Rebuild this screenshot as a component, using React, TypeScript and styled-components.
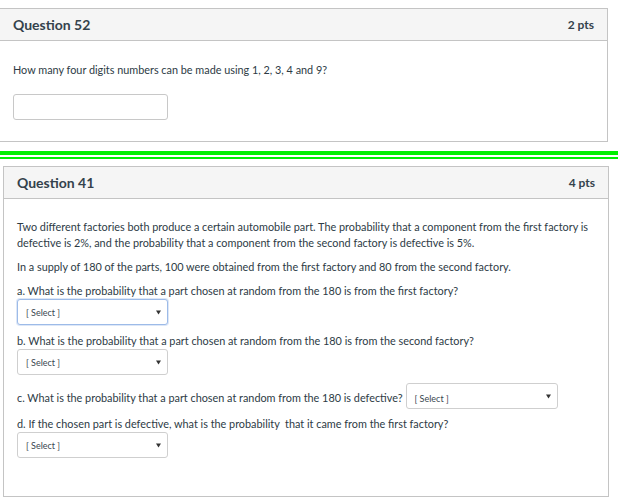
import styled, { createGlobalStyle, css } from "styled-components";

const GlobalStyle = createGlobalStyle`
  html, body {
    margin: 0;
    padding: 0;
    background: #ffffff;
  }
  body {
    font-family: Lato, "Open Sans", "Liberation Sans", sans-serif;
    color: #2d3b45;
  }
`;

interface SelectProps {
  focused?: boolean;
  inline?: boolean;
}

function Select({ focused, inline }: SelectProps) {
  return (
    <StQuiz.Select $focused={focused} $inline={inline}>
      <span className="label">[ Select ]</span>
      <svg width="5" height="5" viewBox="0 0 5 5">
        <path d="M0 0.5 L5 0.5 L2.5 4.5 Z" fill="#333" />
      </svg>
    </StQuiz.Select>
  );
}

function App() {
  return (
    <>
      <GlobalStyle />
      <StQuiz.Page>
        <StQuiz.Panel $first>
          <StQuiz.Header>
            <StQuiz.Title>Question 52</StQuiz.Title>
            <StQuiz.Points>2 pts</StQuiz.Points>
          </StQuiz.Header>
          <StQuiz.Body $first>
            <StQuiz.Text>
              How many four digits numbers can be made using 1, 2, 3, 4 and 9?
            </StQuiz.Text>
            <StQuiz.Input />
          </StQuiz.Body>
        </StQuiz.Panel>

        <StQuiz.Divider>
          <div className="thick" />
          <div className="thin" />
        </StQuiz.Divider>

        <StQuiz.Panel>
          <StQuiz.Header>
            <StQuiz.Title>Question 41</StQuiz.Title>
            <StQuiz.Points>4 pts</StQuiz.Points>
          </StQuiz.Header>
          <StQuiz.Body>
            <StQuiz.Text>
              Two different factories both produce a certain automobile part.
              The probability that a component from the first factory is
              <br />
              defective is 2%, and the probability that a component from the
              second factory is defective is 5%.
            </StQuiz.Text>
            <StQuiz.Text $gap="8px">
              In a supply of 180 of the parts, 100 were obtained from the first
              factory and 80 from the second factory.
            </StQuiz.Text>
            <StQuiz.Text $gap="8px">
              a. What is the probability that a part chosen at random from the
              180 is from the first factory?
            </StQuiz.Text>
            <Select focused />
            <StQuiz.Text $gap="8px">
              b. What is the probability that a part chosen at random from the
              180 is from the second factory?
            </StQuiz.Text>
            <Select />
            <StQuiz.InlineRow>
              <span>
                c. What is the probability that a part chosen at random from the
                180 is defective?
              </span>
              <Select inline />
            </StQuiz.InlineRow>
            <StQuiz.Text $gap="7px">
              d. If the chosen part is defective, what is the probability&nbsp;
              that it came from the first factory?
            </StQuiz.Text>
            <Select />
          </StQuiz.Body>
        </StQuiz.Panel>
      </StQuiz.Page>
    </>
  );
}

export default App;

const StQuiz = {
  Page: styled.div`
    padding-top: 8px;
    width: 618px;
    overflow: hidden;
  `,
  Panel: styled.div<{ $first?: boolean }>`
    border: 1px solid #c4c4c4;
    background: #ffffff;
    ${({ $first }) =>
      $first
        ? css`
            margin-left: -1px;
            width: 607px;
          `
        : css`
            margin-left: 3px;
            width: 604px;
          `}
  `,
  Header: styled.div`
    display: flex;
    align-items: center;
    justify-content: space-between;
    height: 31px;
    padding: 0 13px;
    background: #f5f5f5;
    border-bottom: 1px solid #c4c4c4;
  `,
  Title: styled.div`
    font-size: 14px;
    font-weight: 700;
    color: #34424c;
  `,
  Points: styled.div`
    font-size: 12px;
    font-weight: 700;
    color: #34424c;
  `,
  Body: styled.div<{ $first?: boolean }>`
    display: flex;
    flex-direction: column;
    align-items: flex-start;
    padding: ${({ $first }) => ($first ? "21px 13px 21px" : "20px 13px 38px")};
  `,
  Text: styled.p<{ $gap?: string }>`
    margin: ${({ $gap }) => $gap ?? "0"} 0 0;
    font-size: 10.85px;
    line-height: 16px;
    color: #2d3b45;
    white-space: nowrap;
  `,
  Input: styled.div`
    margin-top: 16px;
    width: 153px;
    height: 24px;
    border: 1px solid #c8c8c8;
    border-radius: 3px;
    background: #ffffff;
  `,
  InlineRow: styled.div`
    display: flex;
    align-items: center;
    margin-top: 8px;
    font-size: 10.85px;
    line-height: 16px;
    color: #2d3b45;
    white-space: nowrap;
    span {
      padding-top: 3px;
    }
  `,
  Select: styled.div<{ $focused?: boolean; $inline?: boolean }>`
    display: flex;
    align-items: ${({ $inline }) => ($inline ? "flex-start" : "center")};
    justify-content: space-between;
    box-sizing: border-box;
    width: ${({ $inline }) => ($inline ? "152px" : "151px")};
    height: 26px;
    margin-left: ${({ $inline }) => ($inline ? "3px" : "0")};
    padding: ${({ $inline }) => ($inline ? "4px 6px 0 8px" : "0 6px 0 8px")};
    border: 1px solid ${({ $focused }) => ($focused ? "#9dbbe8" : "#cfcfcf")};
    border-radius: 3px;
    background: #ffffff;
    box-shadow: ${({ $focused }) =>
      $focused ? "0 0 0 1px rgba(157, 187, 232, 0.35)" : "none"};
    .label {
      font-size: 9px;
      color: #3a4750;
    }
    svg {
      align-self: center;
      margin-top: ${({ $inline }) => ($inline ? "-4px" : "0")};
    }
  `,
  Divider: styled.div`
    margin: 9px 0 7px;
    .thick {
      height: 4px;
      background: #00f000;
    }
    .thin {
      height: 2px;
      margin-top: 2px;
      background: #00f000;
    }
  `,
};
